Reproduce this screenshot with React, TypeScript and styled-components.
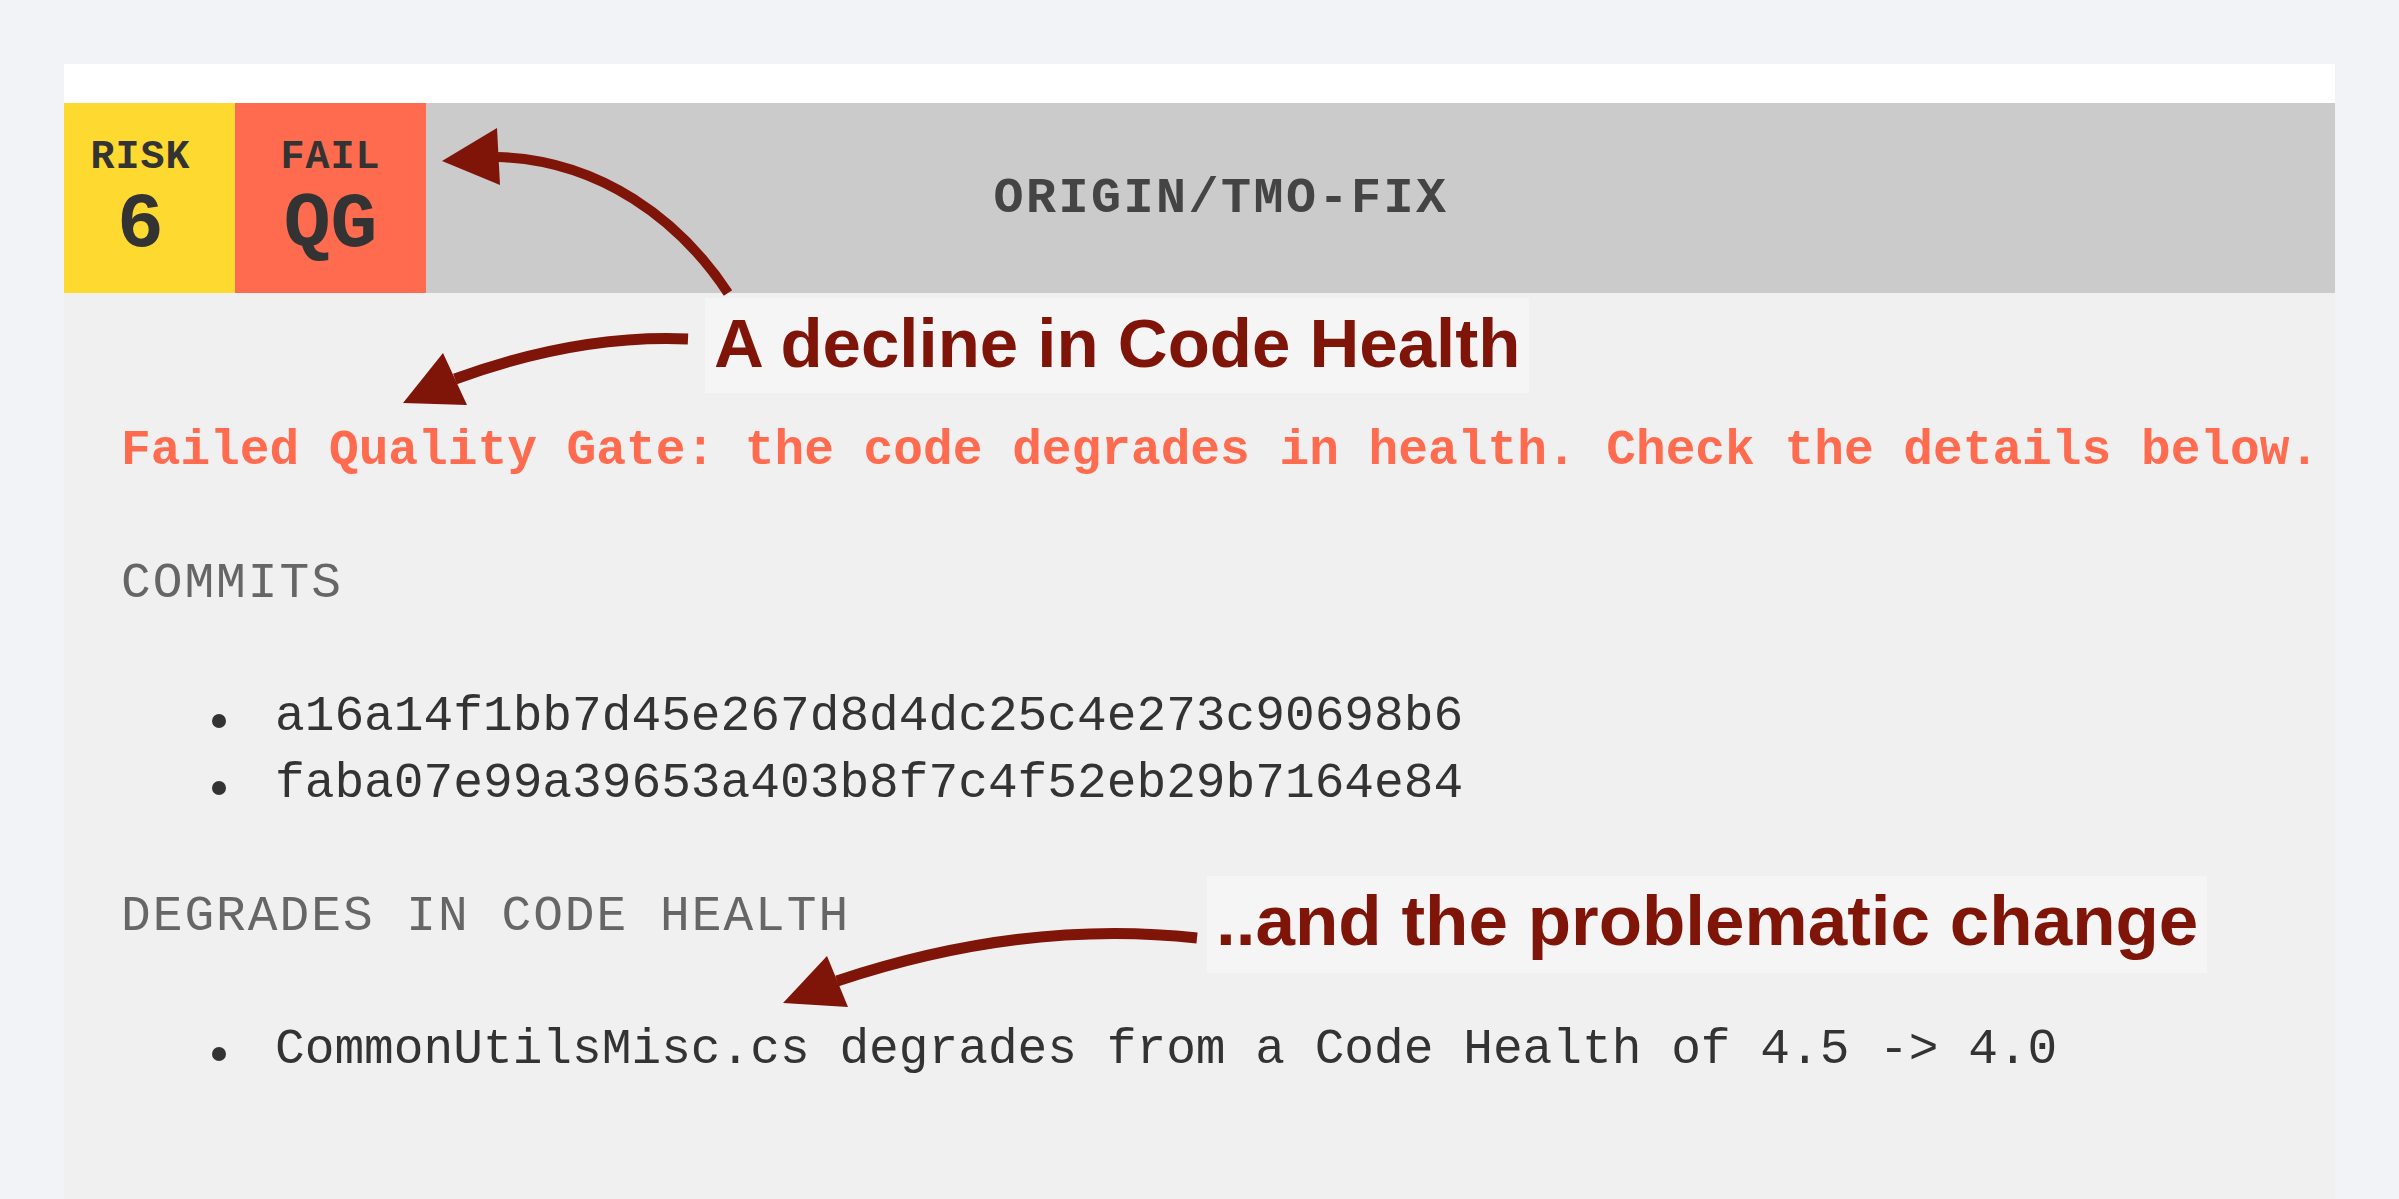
import React from "react";
import styled, { createGlobalStyle } from "styled-components";

const Global = createGlobalStyle`
  html, body {
    margin: 0;
    padding: 0;
    background: #f2f3f7;
    overflow: hidden;
  }
  * { box-sizing: border-box; }
`;

const Card = styled.div`
  position: relative;
  margin: 64px 64px 0;
  background: #ffffff;
  padding-top: 39px;
`;

const Header = styled.div`
  display: flex;
  height: 190px;
  background: #cbcbcb;
  font-family: "Liberation Mono", "Courier New", monospace;
  font-weight: 700;
  color: #333333;
`;

const Badge = styled.div<{ $bg: string; $w: number; $shift?: number }>`
  width: ${(p) => p.$w}px;
  background: ${(p) => p.$bg};
  display: flex;
  flex-direction: column;
  align-items: center;
  justify-content: center;
  gap: 8px;
  padding-top: 6px;
  padding-right: ${(p) => p.$shift ?? 0}px;
`;

const BadgeLabel = styled.div`
  font-size: 40px;
  line-height: 40px;
  letter-spacing: 1px;
`;

const BadgeValue = styled.div`
  font-size: 78px;
  line-height: 78px;
`;

const Title = styled.div`
  flex: 1;
  display: flex;
  align-items: center;
  justify-content: center;
  padding-right: 319px;
  font-size: 50px;
  letter-spacing: 2.5px;
  color: #444444;
`;

const Body = styled.div`
  background: #f0f0f0;
  height: 906px;
  padding: 125px 0 0 57px;
  display: flex;
  flex-direction: column;
  gap: 66px;
  font-family: "Liberation Mono", "Courier New", monospace;
  font-size: 49.5px;
  line-height: 67px;
  white-space: nowrap;
  overflow: hidden;
`;

const Alert = styled.div`
  color: #fe6b4f;
  font-weight: 700;
`;

const SectionTitle = styled.div`
  color: #666666;
  letter-spacing: 2px;
`;

const List = styled.ul`
  list-style: none;
  margin: 0;
  padding: 0;
  color: #333333;
`;

const Item = styled.li`
  display: flex;
  align-items: flex-start;
  &::before {
    content: "";
    flex: none;
    width: 14px;
    height: 14px;
    border-radius: 50%;
    background: #333333;
    margin: 30px 49px 0 91px;
  }
`;

const Overlay = styled.svg`
  position: absolute;
  left: 0;
  top: 0;
  width: 2271px;
  height: 1135px;
  pointer-events: none;
`;

const Callout = styled.div<{ $left: number; $top: number; $size: number; $pt: number; $pb: number }>`
  position: absolute;
  left: ${(p) => p.$left}px;
  top: ${(p) => p.$top}px;
  background: #f5f5f5;
  padding: ${(p) => p.$pt}px 9px ${(p) => p.$pb}px;
  font-family: "Liberation Sans", Arial, sans-serif;
  font-weight: 700;
  font-size: ${(p) => p.$size}px;
  line-height: 85px;
  color: #7f1408;
  white-space: nowrap;
`;

const ARROW = "#7f1408";

export default function App() {
  return (
    <>
      <Global />
      <Card>
        <Header>
          <Badge $bg="#fed930" $w={171} $shift={18}>
            <BadgeLabel>RISK</BadgeLabel>
            <BadgeValue>6</BadgeValue>
          </Badge>
          <Badge $bg="#fe6b4f" $w={191}>
            <BadgeLabel>FAIL</BadgeLabel>
            <BadgeValue>QG</BadgeValue>
          </Badge>
          <Title>ORIGIN/TMO-FIX</Title>
        </Header>
        <Body>
          <Alert>Failed Quality Gate: the code degrades in health. Check the details below.</Alert>
          <SectionTitle>COMMITS</SectionTitle>
          <List>
            <Item>a16a14f1bb7d45e267d8d4dc25c4e273c90698b6</Item>
            <Item>faba07e99a39653a403b8f7c4f52eb29b7164e84</Item>
          </List>
          <SectionTitle>DEGRADES IN CODE HEALTH</SectionTitle>
          <List>
            <Item>CommonUtilsMisc.cs degrades from a Code Health of 4.5 -&gt; 4.0</Item>
          </List>
        </Body>

        <Overlay viewBox="0 0 2271 1135">
          <path d="M 664 229 C 616 156, 536 96, 434 93" fill="none" stroke={ARROW} strokeWidth="10" />
          <polygon points="378,97 433,64 436,121" fill={ARROW} />
          <path d="M 624 275 C 556 272, 476 284, 391 315" fill="none" stroke={ARROW} strokeWidth="11" />
          <polygon points="339,339 379,289 403,341" fill={ARROW} />
          <path d="M 1133 874 C 1016 861, 896 876, 773 917" fill="none" stroke={ARROW} strokeWidth="11" />
          <polygon points="719,939 763,892 784,943" fill={ARROW} />
        </Overlay>
        <Callout $left={641} $top={234} $size={69} $pt={3} $pb={7}>
          A decline in Code Health
        </Callout>
        <Callout $left={1143} $top={812} $size={71} $pt={2} $pb={10}>
          ..and the problematic change
        </Callout>
      </Card>
    </>
  );
}
